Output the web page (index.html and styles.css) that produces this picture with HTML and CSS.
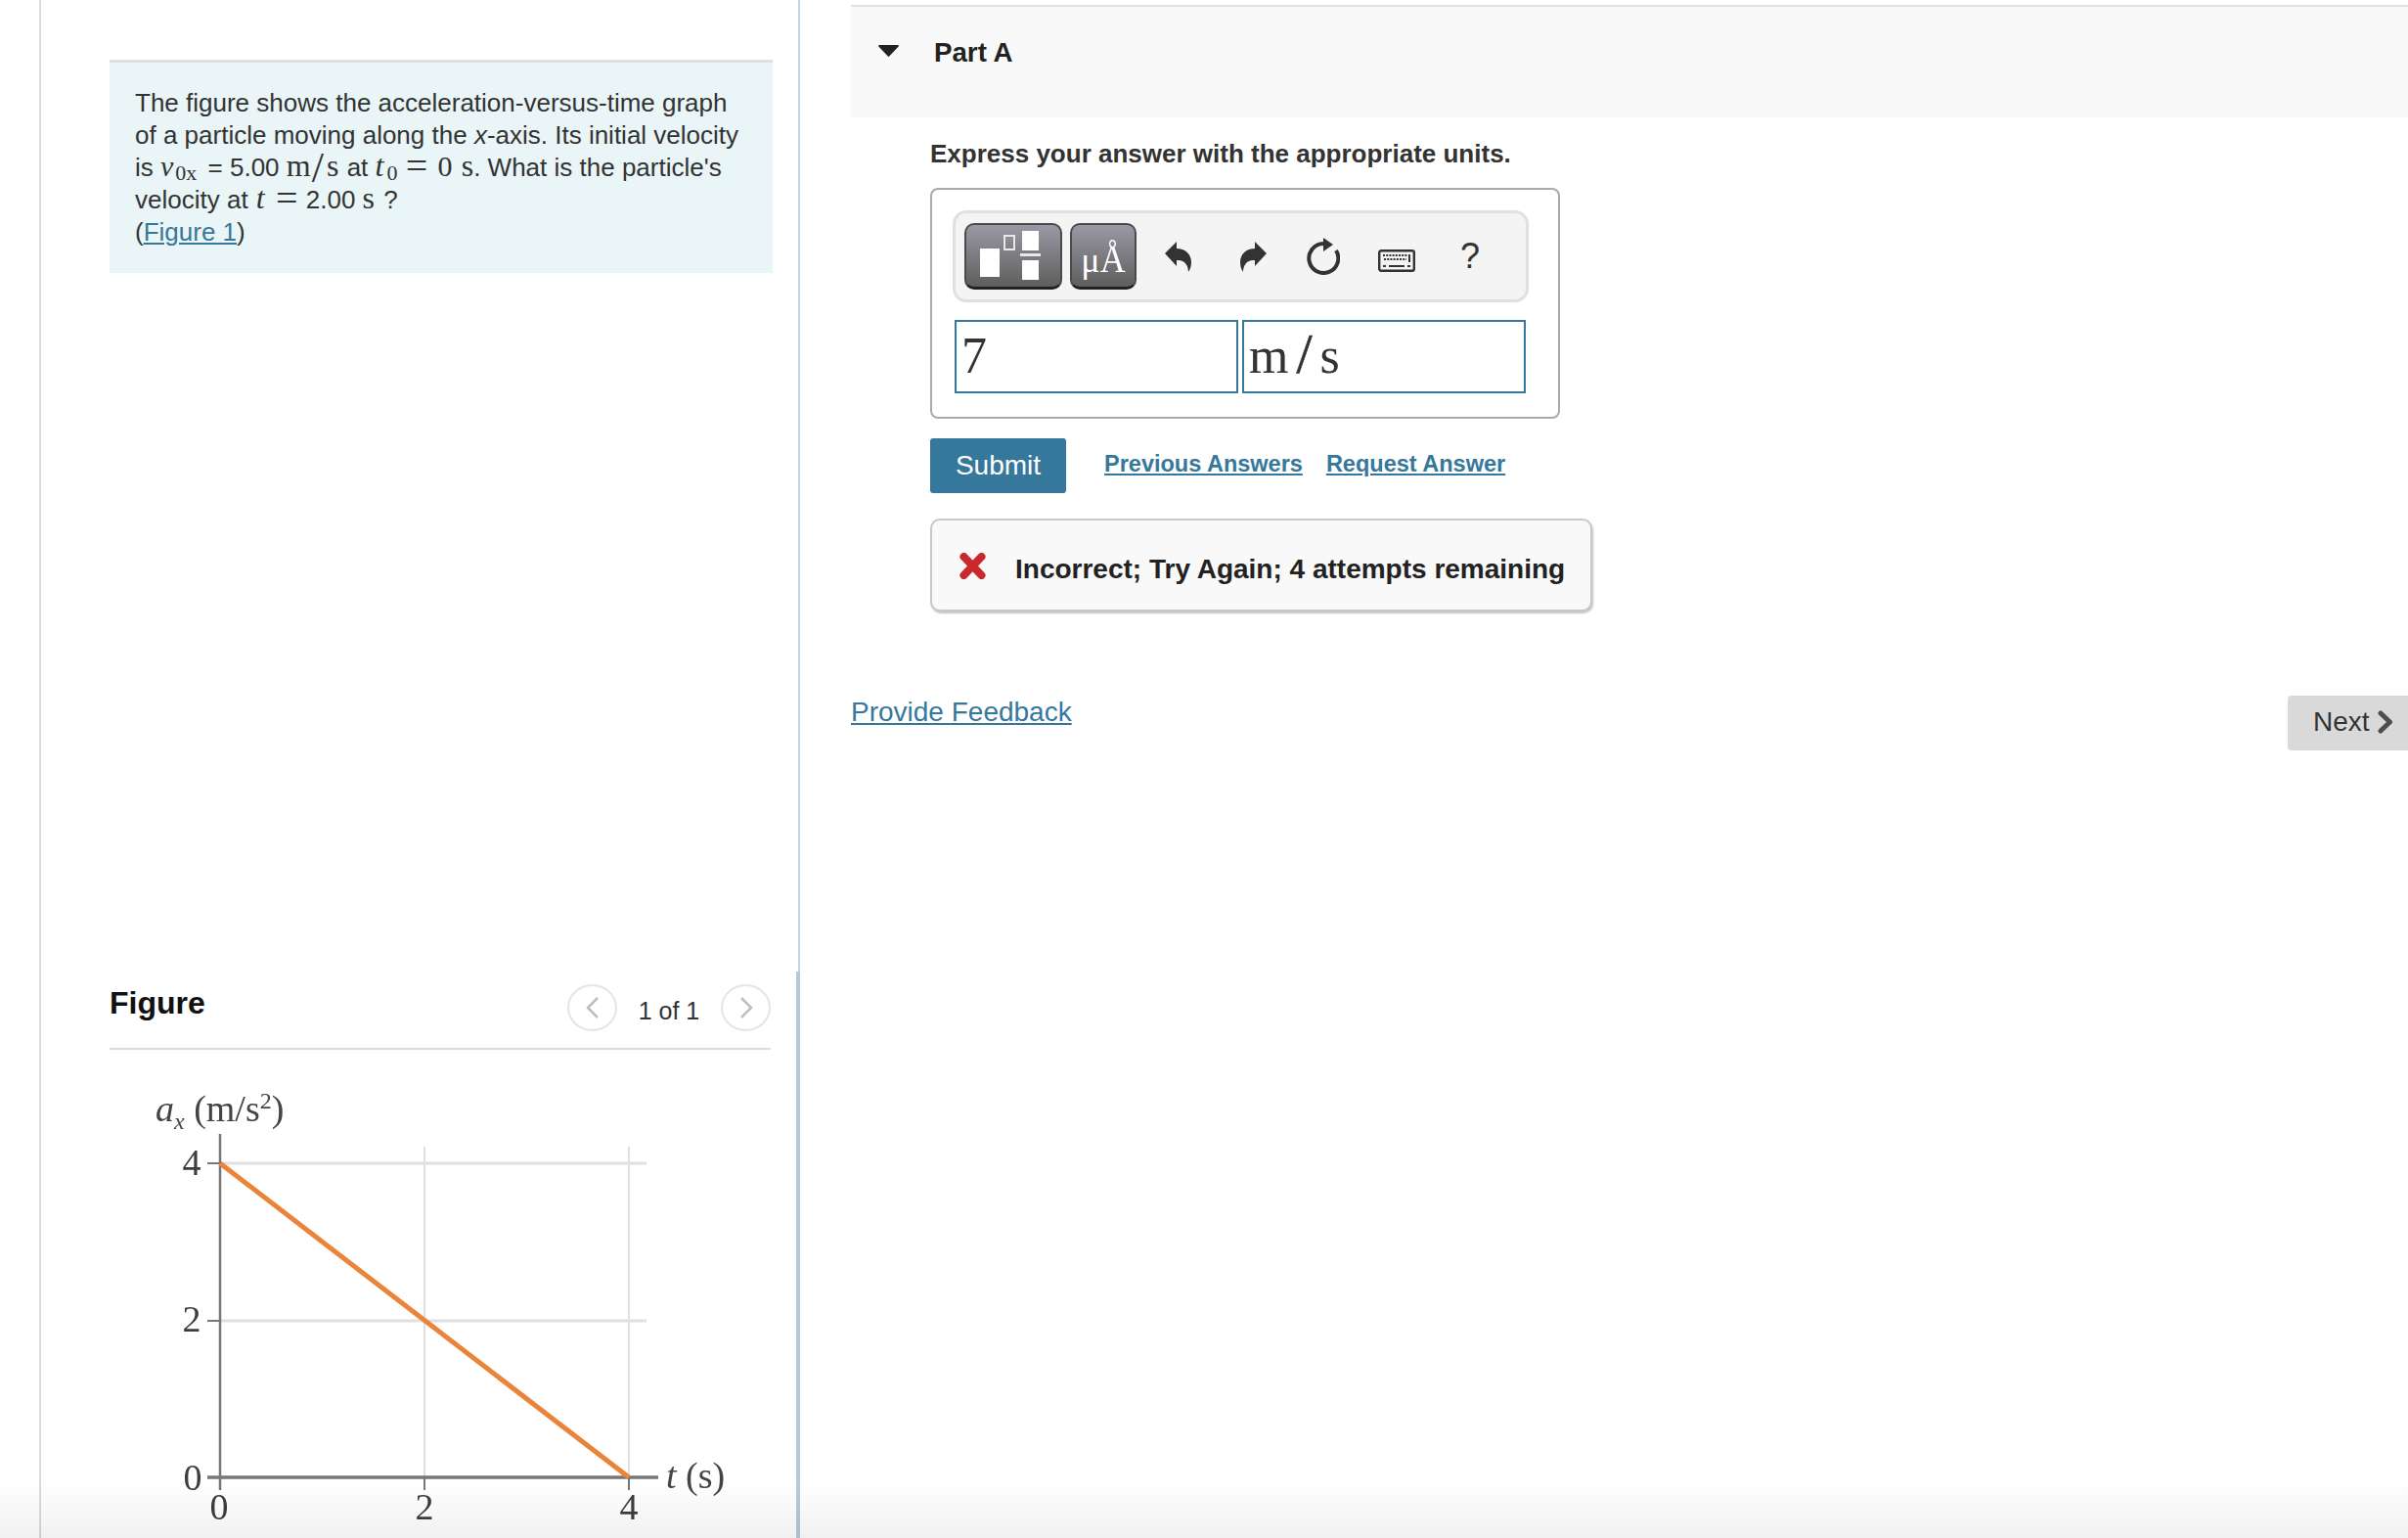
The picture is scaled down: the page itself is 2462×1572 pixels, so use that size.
FILE: index.html
```html
<!DOCTYPE html>
<html lang="en">
<head>
<meta charset="utf-8">
<title>Part A</title>
<link rel="stylesheet" href="styles.css">
</head>
<body>
<div class="page">
  <aside class="left">
    <div class="intro">
      <p class="intro-text">The figure shows the acceleration-versus-time graph<br>
      of a particle moving along the <i>x</i>-axis. Its initial velocity<br>
      is <span class="m mv">v</span><span class="m sub sub-x">0x</span> <span class="sans-eq">=</span> 5.00 <span class="m mu">m</span><span class="m slash">/</span><span class="m mu after-slash">s</span> <span class="after-unit">at</span> <span class="m mt">t</span><span class="m sub sub-t">0</span> <span class="m eq">=</span> <span class="m big">0</span> <span class="m mu after-zero">s</span>. What is the particle's<br>
      velocity at <span class="m mt tight">t</span> <span class="m eq eq-wide">=</span> <span class="after-eq">2.00</span> <span class="m mu">s</span> <span class="qmark">?</span><br>
      (<a href="#fig">Figure 1</a>)</p>
    </div>
    <section class="figure" id="fig">
      <header class="fig-head">
        <h2 class="fig-title">Figure</h2>
        <div class="pager">
          <button class="circle" aria-label="Previous"><svg width="14" height="24" viewBox="0 0 14 24"><path d="M12 2 2 12l10 10" fill="none" stroke="#bdbdbd" stroke-width="2.5"/></svg></button>
          <span class="count">1 of 1</span>
          <button class="circle" aria-label="Next"><svg width="14" height="24" viewBox="0 0 14 24"><path d="M2 2l10 10L2 22" fill="none" stroke="#bdbdbd" stroke-width="2.5"/></svg></button>
        </div>
      </header>
      <svg class="chart" width="676" height="499" viewBox="112 1073 676 499">
        <g stroke="#e0e0e0" fill="none">
          <path d="M225 1189H661M225 1350H661" stroke-width="3"/>
          <path d="M434 1172V1510M643 1172V1510" stroke-width="2"/>
        </g>
        <g stroke="#777" fill="none">
          <path d="M225 1159V1523" stroke-width="2.500"/>
          <path d="M212 1510H673" stroke-width="3.500"/>
          <path d="M212 1189H225M212 1350H225M434 1510V1523M643 1510V1523" stroke-width="2"/>
        </g>
        <path d="M225 1189 643 1510" stroke="#e9843a" stroke-width="5" fill="none"/>
        <g class="chart-num">
          <text x="196" y="1201" text-anchor="middle">4</text>
          <text x="196" y="1361" text-anchor="middle">2</text>
          <text x="197" y="1523" text-anchor="middle">0</text>
          <text x="224" y="1553" text-anchor="middle">0</text>
          <text x="434" y="1553" text-anchor="middle">2</text>
          <text x="643" y="1553" text-anchor="middle">4</text>
        </g>
        <text class="chart-label" x="159" y="1146"><tspan font-style="italic">a</tspan><tspan class="chart-sub" dy="8" font-style="italic">x</tspan><tspan dy="-8"> (m/s</tspan><tspan class="chart-sub" dy="-13">2</tspan><tspan dy="13">)</tspan></text>
        <text class="chart-label" x="681" y="1521"><tspan font-style="italic">t</tspan> (s)</text>
      </svg>
    </section>
  </aside>

  <main class="right">
    <div class="part-bar">
      <svg class="caret" width="21" height="12" viewBox="0 0 21 12"><path d="M1 0H20a1 1 0 0 1 .7 1.600L11.200 11.600a1 1 0 0 1-1.400 0L.3 1.600A1 1 0 0 1 1 0Z" fill="#222"/></svg>
      <h2 class="part-title">Part A</h2>
    </div>
    <div class="part-body">
      <p class="prompt">Express your answer with the appropriate units.</p>
      <div class="answer">
        <div class="toolbar">
          <button class="tool tool-wide" aria-label="Templates">
            <svg width="96" height="63" viewBox="0 0 96 63">
              <rect x="14" y="24" width="20" height="29" fill="#fff"/>
              <rect x="39" y="11" width="10" height="14" fill="none" stroke="#e8e8e8" stroke-width="2"/>
              <rect x="57" y="6" width="17" height="20" fill="#fff"/>
              <rect x="55" y="29" width="21" height="3" fill="#e8e8e8"/>
              <rect x="57" y="36" width="17" height="20" fill="#fff"/>
            </svg>
          </button>
          <button class="tool tool-units" aria-label="Units"><span class="units-mu">μ</span><span class="units-a">Å</span></button>
          <svg class="ic-undo" width="27" height="31" viewBox="0 0 27 31"><path d="M0 12 12 0v7c9 0 15 6 15 14 0 4-1 7-3 10 0-7-4-13-12-12v6Z" fill="#333"/></svg>
          <svg class="ic-redo" width="27" height="31" viewBox="0 0 27 31"><path d="M27 12 15 0v7C6 7 0 13 0 21c0 4 1 7 3 10 0-7 4-13 12-12v6Z" fill="#333"/></svg>
          <svg class="ic-reset" width="34" height="38" viewBox="0 0 34 38"><path d="M30 13A15 15 0 1 1 17 6" fill="none" stroke="#333" stroke-width="4"/><path d="M17 0 27 7 17 14Z" fill="#333"/></svg>
          <svg class="ic-keys" width="38" height="23" viewBox="0 0 38 23">
            <rect x="1.200" y="1.200" width="35.600" height="20.600" rx="2" fill="none" stroke="#333" stroke-width="2.400"/>
            <path d="M5 6h25M6 10h23" fill="none" stroke="#333" stroke-width="2" stroke-dasharray="2 1.200"/>
            <path d="M5 17h3M11 17h16M30 17h3M32 5v8" fill="none" stroke="#333" stroke-width="2"/>
          </svg>
          <span class="ic-help">?</span>
        </div>
        <div class="inputs">
          <div class="field">7</div>
          <div class="field field-unit">m <span class="field-slash">/</span> s</div>
        </div>
      </div>
      <div class="actions">
        <button class="submit">Submit</button>
        <a class="action-link" href="#prev">Previous Answers</a>
        <a class="action-link" href="#req">Request Answer</a>
      </div>
      <div class="result">
        <svg class="ic-x" width="27" height="27" viewBox="0 0 27 27"><path d="M4.500 4 22.500 23M22.500 4 4.500 23" fill="none" stroke="#c9282d" stroke-width="8" stroke-linecap="round"/></svg>
        <span class="result-text">Incorrect; Try Again; 4 attempts remaining</span>
      </div>
    </div>
    <div class="foot">
      <a class="feedback" href="#feedback">Provide Feedback</a>
      <button class="next">Next<svg width="16" height="24" viewBox="0 0 16 24"><path d="M3 3 12.500 12 3 21" fill="none" stroke="#4d4d4d" stroke-width="5" stroke-linecap="round" stroke-linejoin="round"/></svg></button>
    </div>
  </main>
  <div class="fade"></div>
</div>
</body>
</html>
```
FILE: styles.css
```css
* { box-sizing: border-box; }
html, body { margin: 0; padding: 0; background: #fff; }
body { font-family: "Liberation Sans", Arial, sans-serif; color: #333; }
.page { position: relative; display: flex; width: 2462px; height: 1572px; overflow: hidden; }
p, h2 { margin: 0; }
a { color: #36789b; text-decoration: underline; }
button { font-family: inherit; cursor: pointer; }

/* left column */
.left { position: relative; flex: none; width: 778px; margin-left: 40px; padding: 61px 27px 0 70px; border-left: 2px solid #d6dce2; border-right: 2px solid #c5d3e4; }
.left::after { content: ""; position: absolute; top: 993px; right: -2px; bottom: 0; width: 4px; background: #b7c8de; }
.intro { width: 678px; height: 218px; padding: 25px 0 0 26px; background: #e9f5f7; border-top: 3px solid #dfdfdf; }
.intro-text { font-size: 26px; line-height: 33px; white-space: nowrap; }
.m { font-family: "Liberation Serif", "Times New Roman", serif; line-height: 0; }
.mv { font-style: italic; font-size: 30px; }
.mt { font-style: italic; font-size: 32px; }
.mu { font-size: 32px; }
.sub { font-size: 22px; vertical-align: -4px; }
.sub-x { margin-left: 2px; }
.sub-t { margin-left: 3px; }
.sans-eq { margin-left: 4px; }
.slash { vertical-align: -6px; font-size: 44px; margin-left: 1px; }
.after-slash { margin-left: 3px; }
.after-unit { margin-left: 1px; }
.eq { vertical-align: -3px; font-size: 40px; margin-left: 1px; }
.eq-wide { margin-left: 4px; }
.big { font-size: 30px; margin-left: 3px; }
.after-zero { margin-left: 2px; }
.tight { margin-left: 1px; }
.after-eq { margin-left: 1px; }
.qmark { margin-left: 2px; }

.figure { margin-top: 727px; width: 676px; }
.fig-head { display: flex; justify-content: space-between; align-items: flex-start; height: 67px; border-bottom: 2px solid #dcdcdc; }
.fig-title { font-size: 32px; font-weight: 700; line-height: 39px; color: #111; }
.pager { display: flex; align-items: flex-start; margin-left: auto; }
.circle { display: flex; align-items: center; justify-content: center; width: 51px; height: 48px; padding: 0; background: #fff; border: 2px solid #e5e5e5; border-radius: 50%; }
.count { width: 106px; padding-top: 13px; font-size: 25px; line-height: 28px; text-align: center; color: #333; }
.chart { display: block; filter: blur(0.7px); }
.chart-num { font-family: "Liberation Serif", serif; font-size: 38px; fill: #3d3d3d; }
.chart-label { font-family: "Liberation Serif", serif; font-size: 38px; fill: #444; }
.chart-sub { font-size: 24px; }

/* right column */
.right { flex: 1; min-width: 0; margin-left: 52px; }
.part-bar { display: flex; align-items: center; height: 115px; margin-top: 5px; padding: 0 0 24px 28px; background: #f9f9f9; border-top: 2px solid #e2e2e2; }
.part-title { margin-left: 36px; padding-top: 4px; font-size: 27.700px; font-weight: 700; line-height: 34px; color: #222; }
.part-body { padding-left: 81px; }
.prompt { margin-top: 20px; font-size: 26px; font-weight: 700; line-height: 34px; color: #333; }
.answer { width: 644px; height: 236px; margin-top: 18px; padding: 21px 0 0 21px; border: 2px solid #aaa; border-radius: 8px; }
.toolbar { display: flex; align-items: center; width: 589px; height: 94px; padding-left: 9px; background: #f4f4f4; border: 3px solid #e0e0e0; border-radius: 14px; }
.tool { flex: none; height: 68px; padding: 0; color: #fff; background: linear-gradient(#9b99a4, #5e5e5e); border: 2px solid #4a4a4a; border-bottom-width: 3px; border-bottom-color: #222; border-radius: 10px; }
.tool-wide { width: 100px; line-height: 0; }
.tool-units { display: flex; align-items: flex-end; justify-content: center; width: 68px; margin-left: 8px; padding-bottom: 9px; font-family: "Liberation Serif", serif; font-size: 36px; line-height: 36px; }
.units-mu { display: block; }
.units-a { display: block; transform: scaleY(1.14); transform-origin: 50% 82%; }
.ic-undo { flex: none; margin-left: 29px; }
.ic-redo { flex: none; margin-left: 50px; }
.ic-reset { flex: none; margin-left: 41px; }
.ic-keys { flex: none; margin-left: 39px; margin-top: 9px; }
.ic-help { flex: none; margin-left: 46px; font-size: 36px; line-height: 40px; color: #333; }
.inputs { display: flex; gap: 4px; margin: 18px 0 0 2px; }
.field { width: 290px; height: 75px; padding-left: 5px; font-family: "Liberation Serif", serif; font-size: 52px; line-height: 70px; color: #333; background: #fff; border: 2px solid #36789b; }
.field-unit { word-spacing: -5px; }
.field-slash { font-size: 58px; line-height: 0; -webkit-text-stroke: 0.6px #333; }
.actions { display: flex; align-items: flex-start; margin-top: 20px; }
.submit { width: 139px; height: 56px; padding: 0; font-size: 28px; color: #fff; background: #36789b; border: 0; border-radius: 3px; }
.action-link { margin-left: 39px; font-size: 23.500px; font-weight: 700; line-height: 52px; }
.action-link + .action-link { margin-left: 24px; }
.result { display: flex; align-items: center; width: 677px; height: 95px; margin-top: 26px; padding-left: 28px; background: #f9f9f9; border: 2px solid #c8c8c8; border-radius: 10px; box-shadow: 1px 2px 2px #c4c4c4; }
.ic-x { flex: none; margin-top: 2px; }
.result-text { margin-left: 30px; margin-top: 8px; font-size: 28px; font-weight: 700; color: #222; }
.foot { display: flex; justify-content: space-between; align-items: flex-start; margin-top: 86px; }
.feedback { font-size: 28px; line-height: 34px; }
.next { display: flex; align-items: center; width: 123px; height: 56px; padding: 0 0 2px 26px; font-size: 28px; color: #333; background: #d9d9d9; border: 0; border-radius: 4px 0 0 4px; }
.next svg { margin-left: 8px; }

.fade { position: absolute; left: 0; right: 0; bottom: 0; height: 60px; background: linear-gradient(rgba(0,0,0,0), rgba(0,0,0,0.055)); pointer-events: none; }
```
